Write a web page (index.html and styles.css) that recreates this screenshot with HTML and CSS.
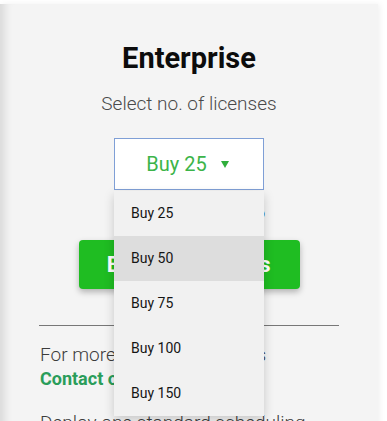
FILE: index.html
```html
<!DOCTYPE html>
<html>
<head>
<meta charset="utf-8">
<link rel="stylesheet" href="styles.css">
</head>
<body>
<div class="card">
  <div class="head">
    <h1 class="title">Enterprise</h1>
    <p class="subtitle">Select no. of licenses</p>
    <div class="select-wrap">
      <div class="select">
        <span class="select-value">Buy 25</span>
        <svg class="caret" width="8" height="7" viewBox="0 0 8 7"><polygon points="0,0 8,0 4,7" fill="#2fae3b"/></svg>
      </div>
      <ul class="menu">
        <li class="menu-item">Buy 25</li>
        <li class="menu-item hover">Buy 50</li>
        <li class="menu-item">Buy 75</li>
        <li class="menu-item">Buy 100</li>
        <li class="menu-item">Buy 150</li>
      </ul>
    </div>
    <p class="price">$1,250 per year info</p>
    <button class="buy">Buy 25 licenses</button>
  </div>
  <div class="rule"></div>
  <div class="body">
    <p class="more">For more than 150 licenses</p>
    <a class="contact">Contact our sales team</a>
    <p class="desc">Deploy one standard scheduling</p>
  </div>
</div>
</body>
</html>
```
FILE: styles.css
```css
html, body {
  margin: 0;
  padding: 0;
  background: #ffffff;
  font-family: Roboto, "Liberation Sans", sans-serif;
  overflow: hidden;
}
.card {
  width: 378px;
  height: 430px;
  margin-top: 4px;
  background: #f4f4f4;
  box-shadow: inset 12px 0 10px -8px rgba(0,0,0,0.12), 2px 0 6px rgba(0,0,0,0.06);
  padding-top: 37px;
  box-sizing: border-box;
}
.head {
  display: flex;
  flex-direction: column;
  align-items: center;
}
.title {
  margin: 0;
  font-size: 29px;
  line-height: 34px;
  font-weight: 700;
  color: #0c0c0c;
}
.subtitle {
  margin: 17px 0 0;
  font-size: 19px;
  line-height: 24px;
  font-weight: 300;
  color: #4a4a4a;
}
.select-wrap {
  position: relative;
  margin-top: 22px;
  z-index: 2;
}
.select {
  width: 150px;
  height: 52px;
  box-sizing: border-box;
  background: #ffffff;
  border: 1px solid #7f9fd6;
  display: flex;
  align-items: center;
  justify-content: center;
  gap: 14px;
  padding-right: 3px;
}
.select-value {
  font-size: 20px;
  color: #3cb449;
}
.caret {
  display: block;
}
.menu {
  position: absolute;
  top: 53px;
  left: 0;
  width: 150px;
  margin: 0;
  padding: 0;
  list-style: none;
  background: #f1f1f1;
  box-shadow: 0 4px 10px rgba(0,0,0,0.18);
}
.menu-item {
  height: 45px;
  line-height: 45px;
  padding-left: 17px;
  font-size: 14px;
  color: #151515;
}
.menu-item.hover {
  background: #dddddd;
}
.price {
  margin: 13px 0 0;
  font-size: 14px;
  line-height: 20px;
  color: #0d2a6b;
  width: 152px;
  text-align: right;
  white-space: nowrap;
}
.buy {
  margin-top: 17px;
  width: 221px;
  height: 49px;
  border: none;
  border-radius: 4px;
  background: #1fbd22;
  color: #ffffff;
  font-family: Roboto, "Liberation Sans", sans-serif;
  font-size: 22px;
  font-weight: 700;
  letter-spacing: 0.6px;
  white-space: nowrap;
  padding: 0;
  box-shadow: 0 3px 6px rgba(0,0,0,0.28);
}
.rule {
  margin: 36px 0 0 39px;
  width: 300px;
  height: 1px;
  background: #777777;
}
.body {
  padding-left: 40px;
  display: flex;
  flex-direction: column;
  align-items: flex-start;
}
.more {
  margin: 16px 0 0;
  font-size: 19px;
  line-height: 25px;
  font-weight: 300;
  color: #3c3c3c;
}
.contact {
  font-size: 18px;
  line-height: 24px;
  font-weight: 700;
  color: #2a9d5a;
}
.desc {
  margin: 19px 0 0;
  font-size: 19px;
  line-height: 25px;
  font-weight: 300;
  color: #3c3c3c;
}
```
